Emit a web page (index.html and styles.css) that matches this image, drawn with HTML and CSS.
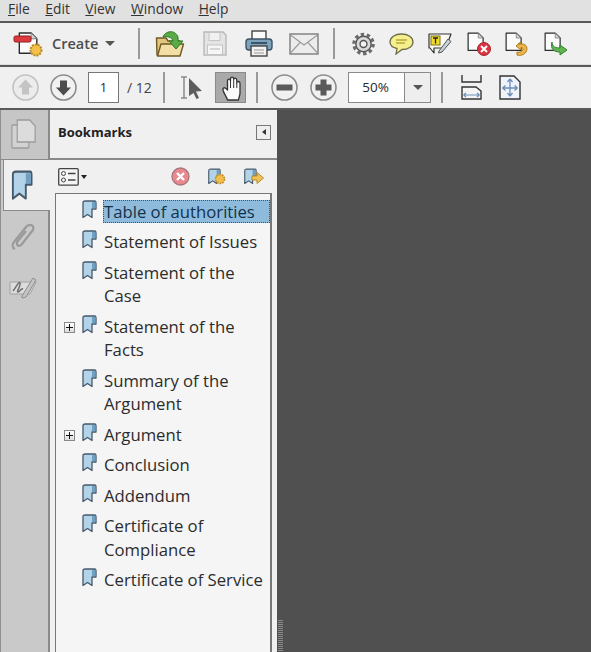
FILE: index.html
```html
<!DOCTYPE html>
<html lang="en">
<head>
    <meta charset="UTF-8">
    <title>Bookmarks</title>
    <link rel="stylesheet" href="styles.css">
</head>
<body>

    <svg class="defs" xmlns="http://www.w3.org/2000/svg">
        <symbol id="bookmark" viewBox="0 0 16 19">
            <path d="M2 2.5 C2 1.5 3 1 4 1 H14 C15 1 15 2 15 3 V9 H11 V17.5 L6.5 14.5 L2 17.5 Z" fill="#b3d3e8" stroke="#46596b" stroke-width="1.3" stroke-linejoin="round"/>
            <path d="M11 2 H14.3 V8.3 H11 Z" fill="#6f9fc2"/>
        </symbol>
        <symbol id="doc" viewBox="0 0 24 28">
            <path d="M1.5 1.5 H15 L21.5 8 V24.5 H1.5 Z" fill="#fbfbfb" stroke="#2c2c2c" stroke-width="1.6" stroke-linejoin="round"/>
            <path d="M15 1.5 V8 H21.5 Z" fill="#d5d5d5" stroke="#777" stroke-width="1"/>
        </symbol>
    </svg>

    <nav class="menubar">
        <span><u>F</u>ile</span>
        <span><u>E</u>dit</span>
        <span><u>V</u>iew</span>
        <span><u>W</u>indow</span>
        <span><u>H</u>elp</span>
    </nav>

    <div class="toolbar toolbar-main">
        <div class="create">
            <svg class="icon-create" viewBox="0 0 30 28">
                <use href="#doc" x="5" y="1" width="21" height="26"/>
                <rect x="1" y="6" width="17" height="6" rx="1.5" fill="#dd3a40" stroke="#8d1f23"/>
                <circle cx="23" cy="20" r="5.5" fill="#f4c04a" stroke="#b98a24" stroke-width="2" stroke-dasharray="2 1"/>
            </svg>
            <span class="create-label">Create</span>
            <span class="caret"></span>
        </div>
        <div class="sep sep-first"></div>
        <div class="group-wide">
            <button class="btn">
                <svg class="icon" width="31" height="30" viewBox="0 0 31 30">
                    <path d="M2 26 L1.5 9 H11 L13 12 H25 V26 Z" fill="#e3c67e" stroke="#6f5a25" stroke-width="1.4" stroke-linejoin="round"/>
                    <path d="M2.500 27 L6 15 H28.500 L25 27 Z" fill="#f3dfa5" stroke="#6f5a25" stroke-width="1.4" stroke-linejoin="round"/>
                    <path d="M8 8 C10 2 20 0 23 8 V12 H28 L21 20 L14 12 H18 C17 8 12 7 8 8 Z" fill="#58ab45" stroke="#2f7a2c"/>
                </svg>
            </button>
            <button class="btn">
                <svg class="icon" width="24" height="25" viewBox="0 0 24 25">
                    <path d="M1 1 H20 L23 4 V24 H1 Z" fill="#e4e4e4" stroke="#b9b9b9" stroke-width="1.4"/>
                    <rect x="6" y="1.500" width="11" height="8" fill="#f1f1f1" stroke="#c4c4c4"/>
                    <rect x="4.500" y="14" width="15" height="9.500" fill="#f6f6f6" stroke="#c4c4c4"/>
                    <rect x="7" y="17" width="10" height="2" fill="#d6d6d6"/>
                </svg>
            </button>
            <button class="btn">
                <svg class="icon" width="28" height="27" viewBox="0 0 28 27">
                    <rect x="7" y="1" width="14" height="10" fill="#fafafa" stroke="#444" stroke-width="1.400"/>
                    <rect x="1" y="9" width="26" height="11" rx="3" fill="#7da3bd" stroke="#3c5468" stroke-width="1.400"/>
                    <rect x="6" y="12" width="16" height="2" fill="#3c5468"/>
                    <rect x="6" y="16" width="16" height="10" fill="#f2f2f2" stroke="#444" stroke-width="1.400"/>
                    <path d="M9 20 H19 M9 23 H19" stroke="#999"/>
                </svg>
            </button>
            <button class="btn">
                <svg class="icon" width="30" height="22" viewBox="0 0 30 22">
                    <rect x="1" y="1" width="28" height="20" fill="#ececec" stroke="#7c7c7c" stroke-width="1.400"/>
                    <path d="M1.500 2 L15 12 L28.500 2 M1.500 20 L11 9.500 M28.500 20 L19 9.500" fill="none" stroke="#9b9b9b" stroke-width="1.200"/>
                </svg>
            </button>
        </div>
        <div class="sep sep-second"></div>
        <div class="group-narrow">
            <button class="btn">
                <svg class="icon" width="23" height="24" viewBox="0 0 24 24">
                    <circle cx="12" cy="12" r="8" fill="#d8d8d8" stroke="#555" stroke-width="1.500"/>
                    <circle cx="12" cy="12" r="10" fill="none" stroke="#6a6a6a" stroke-width="3.500" stroke-dasharray="3.500 2.780"/>
                    <circle cx="12" cy="12" r="3.600" fill="#f2f2f2" stroke="#555" stroke-width="1.500"/>
                </svg>
            </button>
            <button class="btn">
                <svg class="icon" width="25" height="22" viewBox="0 0 25 22">
                    <path d="M12.500 1 C19 1 24 4.500 24 9 C24 13.500 19 16.500 13 16.500 L7 21 L8 15.500 C3.500 14.500 1 12 1 9 C1 4.500 6 1 12.500 1 Z" fill="#f6ef8e" stroke="#6e6e4a" stroke-width="1.300"/>
                    <path d="M7 7 H18 M7 10 H16" stroke="#b5ab3a" stroke-width="1.300"/>
                </svg>
            </button>
            <button class="btn">
                <svg class="icon" width="24" height="21" viewBox="0 0 24 21">
                    <path d="M1 1 H23 L20 9 L14 15 H6 V20 L2 15 H1 Z" fill="#fbfbf4" stroke="#333" stroke-width="1.200" stroke-linejoin="round"/>
                    <rect x="3" y="3" width="9" height="9" fill="#f1dc2c" stroke="#7b7115"/>
                    <path d="M5 5 H10 M7.500 5 V10.500" stroke="#222" stroke-width="1.300"/>
                    <path d="M11 18 L20 6 L23 8.500 L14 19 L10.500 20 Z" fill="#c7d3dc" stroke="#555"/>
                </svg>
            </button>
            <button class="btn">
                <svg class="icon" width="24" height="24" viewBox="0 0 24 24">
                    <use href="#doc" width="18" height="21"/>
                    <circle cx="17" cy="17" r="6.500" fill="#dc3340" stroke="#a92530"/>
                    <path d="M14 14 L20 20 M20 14 L14 20" stroke="#fff" stroke-width="2"/>
                </svg>
            </button>
            <button class="btn">
                <svg class="icon" width="24" height="24" viewBox="0 0 24 24">
                    <use href="#doc" width="18" height="21"/>
                    <path d="M13 11 H17 C22 11 23 16 21 19 C19 22 15 23 12 22 L12 19 C15 20 18 18 18 16 C18 14.500 17 14.500 16 14.500 V17 L11 13 L16 9 Z" fill="#eeb64a" stroke="#b07d1d" transform="translate(0 1)"/>
                </svg>
            </button>
            <button class="btn">
                <svg class="icon" width="24" height="24" viewBox="0 0 24 24">
                    <use href="#doc" width="18" height="21"/>
                    <path d="M8 10 C8 15 12 16 16 16 V13 L23 18 L16 23 V20 C10 20 6 17 8 10 Z" fill="#62b652" stroke="#2f7f2f"/>
                </svg>
            </button>
        </div>
    </div>

    <div class="toolbar toolbar-nav">
        <button class="btn btn-round">
            <svg class="icon" width="27" height="27" viewBox="0 0 27 27">
                <circle cx="13.500" cy="13.500" r="12.500" fill="#ececec" stroke="#c2c2c2" stroke-width="1.600"/>
                <path d="M13.500 5.500 L21 13.500 H17 V20.500 H10 V13.500 H6 Z" fill="#c4c4c4"/>
            </svg>
        </button>
        <button class="btn btn-round">
            <svg class="icon" width="27" height="27" viewBox="0 0 27 27">
                <circle cx="13.500" cy="13.500" r="12.500" fill="#f1f1f1" stroke="#8c8c8c" stroke-width="1.600"/>
                <path d="M13.500 21.500 L21 13.500 H17 V6.500 H10 V13.500 H6 Z" fill="#4d4d4d"/>
            </svg>
        </button>
        <div class="page-box">1</div>
        <span class="page-total">/ 12</span>
        <div class="sep sep-page"></div>
        <button class="btn btn-tool">
            <svg class="icon" width="23" height="24" viewBox="0 0 23 24">
                <path d="M1 1 H7 M1 22 H7 M4 1 V22" fill="none" stroke="#8a8a8a" stroke-width="1.500"/>
                <path d="M9 2 L22 15 L16 15.500 L19 22 L16.500 23 L13.500 17 L9 20 Z" fill="#5d5d5d"/>
            </svg>
        </button>
        <button class="btn btn-tool btn-hand">
            <svg class="icon" width="24" height="26" viewBox="0 0 24 26">
                <path d="M6 25 C5 21 1 17 1.500 14 C2 12 4 12.500 6 15 V6 C6 3.500 8.800 3.500 9 6 V4 C9 1.500 12 1.500 12.200 4 V4.500 C12.500 2.500 15.300 2.800 15.300 5.500 V8 C15.500 5.800 18.500 6 18.500 8.500 V18 C18.500 21 17 23 17 25 Z" transform="translate(2.500 0)" fill="#fafafa" stroke="#333" stroke-width="1.300" stroke-linejoin="round"/>
                <path d="M11.500 6 V13 M14.700 5 V13 M17.800 8 V13" stroke="#333"/>
            </svg>
        </button>
        <div class="sep sep-hand"></div>
        <button class="btn btn-zoom">
            <svg class="icon" width="27" height="27" viewBox="0 0 27 27">
                <circle cx="13.500" cy="13.500" r="12.500" fill="#f1f1f1" stroke="#8c8c8c" stroke-width="1.600"/>
                <rect x="5.500" y="10.500" width="16" height="6" fill="#5a5a5a"/>
            </svg>
        </button>
        <button class="btn btn-zoom">
            <svg class="icon" width="27" height="27" viewBox="0 0 27 27">
                <circle cx="13.500" cy="13.500" r="12.500" fill="#f1f1f1" stroke="#8c8c8c" stroke-width="1.600"/>
                <path d="M5.500 10.500 H10.500 V5.500 H16.500 V10.500 H21.500 V16.500 H16.500 V21.500 H10.500 V16.500 H5.500 Z" fill="#5a5a5a"/>
            </svg>
        </button>
        <div class="zoom-box">
            <span class="zoom-value">50%</span>
            <span class="zoom-arrow"><span class="caret caret-small"></span></span>
        </div>
        <div class="sep sep-zoom"></div>
        <button class="btn btn-fit">
            <svg class="icon" width="21" height="25" viewBox="0 0 21 25">
                <path d="M1 0 V7 H20 V0" fill="none" stroke="#333" stroke-width="1.400"/>
                <path d="M1 24 V12 H15 L20 16 V24 Z" fill="#f4f4f4" stroke="#333" stroke-width="1.400"/>
                <path d="M2.500 20 H18.500 M2.500 20 L5 18 M2.500 20 L5 22 M18.500 20 L16 18 M18.500 20 L16 22" fill="none" stroke="#6d8fb5" stroke-width="1.200"/>
            </svg>
        </button>
        <button class="btn btn-fit">
            <svg class="icon" width="22" height="25" viewBox="0 0 22 25">
                <path d="M1 1 H15 L21 7 V24 H1 Z" fill="#eff4fa" stroke="#333" stroke-width="1.400"/>
                <path d="M11 4 V21 M3.500 13 H18.500 M11 4 L8.500 7 M11 4 L13.500 7 M11 21 L8.500 18 M11 21 L13.500 18 M3.500 13 L6.500 10.500 M3.500 13 L6.500 15.500 M18.500 13 L15.500 10.500 M18.500 13 L15.500 15.500" fill="none" stroke="#6d8fb5" stroke-width="1.300"/>
            </svg>
        </button>
    </div>

    <main class="workspace">
        <aside class="tabs">
            <div class="tab tab-pages">
                <svg width="25" height="30" viewBox="0 0 28 30" preserveAspectRatio="none">
                    <rect x="1" y="6" width="19" height="23" rx="1" fill="#d2d2d2" stroke="#9a9a9a" stroke-width="1.300"/>
                    <path d="M7 1 H21 L27 7 V23 H7 Z" fill="#dcdcdc" stroke="#9a9a9a" stroke-width="1.300"/>
                </svg>
            </div>
            <div class="tab tab-active">
                <svg width="23" height="31" viewBox="0 0 16 19" preserveAspectRatio="none"><use href="#bookmark"/></svg>
            </div>
            <div class="tab">
                <svg width="25" height="29" viewBox="0 0 25 29">
                    <path d="M4 27 C1 26 1 22 3 20 L15 5 C18 1 24 3 22 8 L11 22 C9 25 5 24 6 20 L15 9" fill="none" stroke="#9a9a9a" stroke-width="2.200"/>
                </svg>
            </div>
            <div class="tab tab-sign">
                <svg width="28" height="24" viewBox="0 0 28 24">
                    <path d="M1 7 H27 L21 19 H1 Z" fill="#dcdcdc" stroke="#a0a0a0"/>
                    <path d="M4 16 C7 12 10 6 11 8 C12 11 7 17 9 17 C11 17 12 13 14 14" fill="none" stroke="#6e6e6e" stroke-width="1.500"/>
                    <path d="M13 21 L24 3 L27 5 L17 22 L13 23 Z" fill="#c4c4c4" stroke="#8f8f8f"/>
                </svg>
            </div>
        </aside>

        <section class="panel">
            <header class="panel-head">
                <h2>Bookmarks</h2>
                <span class="collapse"></span>
            </header>
            <div class="panel-tools">
                <svg class="tool-options" width="29" height="18" viewBox="0 0 29 18">
                    <rect x="0.700" y="0.700" width="19.500" height="16.500" rx="1" fill="#f5f5f5" stroke="#444" stroke-width="1.300"/>
                    <circle cx="5.500" cy="5.500" r="2" fill="none" stroke="#444"/>
                    <circle cx="5.500" cy="12" r="2" fill="none" stroke="#444"/>
                    <path d="M10 5.500 H17.500 M10 12 H17.500" stroke="#444" stroke-width="1.300"/>
                    <path d="M23 7 H29 L26 11 Z" fill="#222"/>
                </svg>
                <svg class="tool-delete" width="19" height="19" viewBox="0 0 19 19">
                    <circle cx="9.500" cy="9.500" r="8.500" fill="#e8888f" stroke="#a9757a" stroke-width="1.300"/>
                    <path d="M6 6 L13 13 M13 6 L6 13" stroke="#fff" stroke-width="2.400"/>
                </svg>
                <svg class="tool-new" width="20" height="20" viewBox="0 0 20 20">
                    <use href="#bookmark" width="14" height="19"/>
                    <circle cx="13" cy="12" r="4.500" fill="#f2bd4a" stroke="#c69030" stroke-width="1.600" stroke-dasharray="2 .8"/>
                </svg>
                <svg class="tool-move" width="21" height="20" viewBox="0 0 21 20">
                    <use href="#bookmark" width="14" height="19"/>
                    <path d="M9 9 H14 V5.500 L20.500 11 L14 16.500 V13 H9 Z" fill="#f0c255" stroke="#b8892a"/>
                </svg>
            </div>
            <ul class="tree">
                <li class="tree-row">
                    <span class="toggle-slot"></span>
                    <svg class="mark"><use href="#bookmark"/></svg>
                    <span class="label label-selected">Table of authorities</span>
                </li>
                <li class="tree-row">
                    <span class="toggle-slot"></span>
                    <svg class="mark"><use href="#bookmark"/></svg>
                    <span class="label">Statement of Issues</span>
                </li>
                <li class="tree-row">
                    <span class="toggle-slot"></span>
                    <svg class="mark"><use href="#bookmark"/></svg>
                    <span class="label">Statement of the Case</span>
                </li>
                <li class="tree-row">
                    <span class="toggle-slot"><span class="toggle"></span></span>
                    <svg class="mark"><use href="#bookmark"/></svg>
                    <span class="label">Statement of the Facts</span>
                </li>
                <li class="tree-row">
                    <span class="toggle-slot"></span>
                    <svg class="mark"><use href="#bookmark"/></svg>
                    <span class="label">Summary of the Argument</span>
                </li>
                <li class="tree-row">
                    <span class="toggle-slot"><span class="toggle"></span></span>
                    <svg class="mark"><use href="#bookmark"/></svg>
                    <span class="label">Argument</span>
                </li>
                <li class="tree-row">
                    <span class="toggle-slot"></span>
                    <svg class="mark"><use href="#bookmark"/></svg>
                    <span class="label">Conclusion</span>
                </li>
                <li class="tree-row">
                    <span class="toggle-slot"></span>
                    <svg class="mark"><use href="#bookmark"/></svg>
                    <span class="label">Addendum</span>
                </li>
                <li class="tree-row">
                    <span class="toggle-slot"></span>
                    <svg class="mark"><use href="#bookmark"/></svg>
                    <span class="label">Certificate of Compliance</span>
                </li>
                <li class="tree-row">
                    <span class="toggle-slot"></span>
                    <svg class="mark"><use href="#bookmark"/></svg>
                    <span class="label">Certificate of Service</span>
                </li>
            </ul>
        </section>

        <div class="document">
            <div class="grip"></div>
        </div>
    </main>

</body>
</html>
```

FILE: styles.css
```css
html, body {
    height: 100%;
}

body {
    font-family: "Open Sans", "Noto Sans", sans-serif;
    margin: 0;
    background: #e1e1e1;
    color: #2a2a2a;
    display: flex;
    flex-direction: column;
    overflow: hidden;
}

.defs {
    position: absolute;
    width: 0;
    height: 0;
}

/* Menu bar */
.menubar {
    display: flex;
    gap: 15.500px;
    height: 21px;
    padding-left: 8px;
    font-size: 13.800px;
    line-height: 18px;
    color: #333;
    flex: none;
}

/* Toolbars */
.toolbar {
    display: flex;
    align-items: center;
    flex: none;
    background: #f0f0f0;
    border-top: 2px solid #5a5a5a;
}

.toolbar-main {
    height: 41px;
    border-bottom: 1px solid #dcdcdc;
}

.toolbar-nav {
    height: 41px;
    padding-left: 6px;
    border-bottom: 2px solid #5a5a5a;
}

.btn {
    display: flex;
    align-items: center;
    justify-content: center;
    flex: none;
    padding: 0;
    border: none;
    background: none;
}

.create {
    display: flex;
    align-items: center;
    width: 138px;
    padding-left: 13px;
    box-sizing: border-box;
}

.icon-create {
    width: 30px;
    height: 28px;
}

.create-label {
    margin-left: 9px;
    font-size: 14.500px;
    font-weight: 600;
    color: #4d4d4d;
}

.caret {
    display: block;
    margin-left: 7px;
    width: 0;
    height: 0;
    border-left: 5px solid transparent;
    border-right: 5px solid transparent;
    border-top: 5px solid #555;
}

.caret-small {
    margin: 0;
    border-width: 5px 5px 0;
}

.sep {
    flex: none;
    width: 2px;
    height: 31px;
    background: #9a9a9a;
}

.sep-first {
    margin-right: 8px;
}

.sep-second {
    margin: 0 9px 0 7px;
}

.group-wide {
    display: flex;
}

.group-wide .btn {
    width: 44.500px;
}

.group-narrow {
    display: flex;
}

.group-narrow .btn {
    width: 38.500px;
}

.btn-round {
    width: 38.500px;
}

.page-box {
    flex: none;
    width: 29px;
    height: 29px;
    margin-left: 5px;
    border: 1px solid #777;
    background: #fff;
    font-size: 13px;
    line-height: 29px;
    text-align: center;
}

.page-total {
    flex: none;
    width: 36px;
    margin-left: 8px;
    font-size: 14px;
    color: #444;
}

.sep-page {
    margin-right: 8px;
}

.btn-tool {
    width: 37px;
    height: 31px;
}

.btn-hand {
    width: 31px;
    margin-left: 5px;
    background: #a9a9a9;
    border: 1px solid #8a8a8a;
    box-sizing: border-box;
}

.sep-hand {
    margin-left: 10px;
    margin-right: 7px;
}

.btn-zoom {
    width: 39px;
}

.zoom-box {
    display: flex;
    flex: none;
    box-sizing: border-box;
    width: 83px;
    height: 31px;
    margin-left: 5px;
    border: 1px solid #8a8a8a;
    background: #fff;
}

.zoom-value {
    box-sizing: border-box;
    width: 55px;
    padding-right: 2px;
    font-size: 13.500px;
    line-height: 29px;
    text-align: center;
}

.zoom-arrow {
    display: flex;
    flex: 1;
    align-items: center;
    justify-content: center;
    background: #eee;
    border-left: 1px solid #8a8a8a;
}

.sep-zoom {
    margin-left: 10px;
    margin-right: 9px;
}

.btn-fit {
    width: 38.500px;
}

/* Main area */
.workspace {
    display: flex;
    flex: 1;
    min-height: 0;
}

.tabs {
    flex: none;
    box-sizing: border-box;
    width: 50px;
    background: #c9c9c9;
    border-left: 1px solid #8f8f8f;
    border-right: 2px solid #8a8a8a;
}

.tab {
    display: flex;
    align-items: center;
    justify-content: center;
    height: 51px;
    padding-right: 3px;
}

.tab-pages {
    height: 47px;
    padding-bottom: 2px;
    background: #c6c6c6;
    border-bottom: 1px solid #8a8a8a;
}

.tab-active {
    height: 50px;
    margin-right: -2px;
    margin-left: 2px;
    padding-right: 11px;
    background: #f0f0f0;
    border-left: 1px solid #8a8a8a;
    border-bottom: 1px solid #8a8a8a;
}

.tab-sign {
    margin-top: -1px;
}

.panel {
    display: flex;
    flex-direction: column;
    flex: none;
    width: 227px;
    background: #f0f0f0;
}

.panel-head {
    display: flex;
    align-items: center;
    justify-content: space-between;
    flex: none;
    height: 44px;
    padding: 0 6px 4px 8px;
    border-bottom: 2px solid #8a8a8a;
}

.panel-head h2 {
    margin: 0;
    font-size: 13px;
    font-weight: 700;
    color: #222;
}

.collapse {
    display: flex;
    align-items: center;
    justify-content: center;
    box-sizing: border-box;
    width: 15px;
    height: 15px;
    border: 1px solid #777;
    background: #eee;
}

.collapse::before {
    content: "";
    border-top: 3.500px solid transparent;
    border-bottom: 3.500px solid transparent;
    border-right: 4px solid #333;
}

.panel-tools {
    display: flex;
    align-items: center;
    flex: none;
    height: 33px;
    padding-left: 8px;
}

.tool-delete {
    margin-left: 84px;
}

.tool-new {
    margin-left: 17px;
}

.tool-move {
    margin-left: 16px;
}

.tree {
    display: flex;
    flex-direction: column;
    gap: 7px;
    flex: 1;
    margin: 0 5px;
    padding: 5.500px 0 0 8px;
    list-style: none;
    background: #f5f5f5;
    border: 1px solid #777;
    border-bottom: none;
    border-right-width: 2px;
    box-sizing: border-box;
    width: 217px;
}

.tree-row {
    display: flex;
    align-items: flex-start;
}

.toggle-slot {
    flex: none;
    width: 17px;
    height: 18px;
    padding-top: 7px;
    box-sizing: border-box;
}

.toggle {
    display: block;
    position: relative;
    box-sizing: border-box;
    width: 11px;
    height: 11px;
    border: 1px solid #888;
    background: linear-gradient(#fff, #ddd);
}

.toggle::before,
.toggle::after {
    content: "";
    position: absolute;
    background: #111;
}

.toggle::before {
    left: 1px;
    top: 4px;
    width: 7px;
    height: 1px;
}

.toggle::after {
    left: 4px;
    top: 1px;
    width: 1px;
    height: 7px;
}

.mark {
    flex: none;
    width: 16px;
    height: 19px;
}

.label {
    flex: 1;
    min-width: 0;
    margin-left: 6px;
    padding-left: 1px;
    font-size: 16.700px;
    line-height: 23.500px;
    color: #2c2c2c;
}

.label-selected {
    background: #8ebbdb;
    outline: 1px dotted #33566f;
    outline-offset: -1px;
    color: #13324a;
}

.document {
    display: flex;
    align-items: flex-end;
    flex: 1;
    padding-left: 1px;
    background: #505050;
}

.grip {
    width: 5px;
    height: 32px;
    background: repeating-linear-gradient(#8a8a8a 0 1px, #505050 1px 2px);
}
```
